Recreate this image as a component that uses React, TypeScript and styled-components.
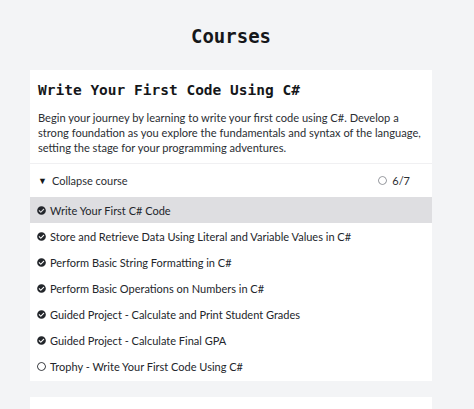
import * as React from 'react'
import styled, { createGlobalStyle } from 'styled-components'
import { FaCheckCircle, FaRegCircle } from 'react-icons/fa'

const GlobalStyle = createGlobalStyle`
  body {
    margin: 0;
    background: #f3f4f6;
    font-family: Lato, "Noto Sans", sans-serif;
    color: #1f2328;
  }
`

const Page = styled.main`
  padding: 24px 42px 0 30px;
`

const Title = styled.h1`
  margin: 0 0 22px;
  text-align: center;
  font-family: "DejaVu Sans Mono", monospace;
  font-weight: bold;
  font-size: 19px;
  line-height: 24px;
  color: #15171a;
`

const Card = styled.section`
  background: #fff;
  margin-bottom: 16px;
  padding-bottom: 2px;
`

const CardHead = styled.div`
  padding: 10px 5px 8px 8px;
  border-bottom: 1px solid #f0f0f2;
`

const CardTitle = styled.h2`
  margin: 0 0 10px;
  font-family: "DejaVu Sans Mono", monospace;
  font-weight: bold;
  font-size: 14.5px;
  line-height: 20px;
  color: #15171a;
`

const Description = styled.p`
  margin: 0;
  font-size: 11.1px;
  line-height: 15px;
  color: #2b2e33;
`

const Toggle = styled.div`
  display: flex;
  align-items: center;
  justify-content: space-between;
  height: 33px;
  padding: 0 22px 0 8px;
  font-size: 11px;
  color: #2b2e33;
`

const ToggleLabel = styled.span`
  display: flex;
  align-items: center;
  gap: 5px;
`

const Caret = styled.span`
  font-size: 9px;
  color: #15171a;
`

const Progress = styled.span`
  display: flex;
  align-items: center;
  gap: 5px;
  svg { color: #8a8d93; width: 9px; height: 9px; }
`

const List = styled.ul`
  list-style: none;
  margin: 0;
  padding: 0;
`

const Item = styled.li<{ $active?: boolean }>`
  display: flex;
  align-items: center;
  gap: 4px;
  height: 26px;
  padding-left: 7px;
  font-size: 11px;
  color: #23262b;
  background: ${p => (p.$active ? '#dedee1' : 'transparent')};
  svg { width: 9px; height: 9px; flex-shrink: 0; }
`

const modules = [
  { name: 'Write Your First C# Code', done: true },
  { name: 'Store and Retrieve Data Using Literal and Variable Values in C#', done: true },
  { name: 'Perform Basic String Formatting in C#', done: true },
  { name: 'Perform Basic Operations on Numbers in C#', done: true },
  { name: 'Guided Project - Calculate and Print Student Grades', done: true },
  { name: 'Guided Project - Calculate Final GPA', done: true },
  { name: 'Trophy - Write Your First Code Using C#', done: false },
]

const App = () => (
  <Page>
    <GlobalStyle />
    <Title>Courses</Title>
    <Card>
      <CardHead>
        <CardTitle>Write Your First Code Using C#</CardTitle>
        <Description>
          Begin your journey by learning to write your first code using C#. Develop a strong
          foundation as you explore the fundamentals and syntax of the language, setting the
          stage for your programming adventures.
        </Description>
      </CardHead>
      <Toggle>
        <ToggleLabel>
          <Caret>▼</Caret>
          Collapse course
        </ToggleLabel>
        <Progress>
          <FaRegCircle />
          6/7
        </Progress>
      </Toggle>
      <List>
        {modules.map((m, i) => (
          <Item key={m.name} $active={i === 0}>
            {m.done ? <FaCheckCircle /> : <FaRegCircle />}
            {m.name}
          </Item>
        ))}
      </List>
    </Card>
    <Card style={{ height: 40 }} />
  </Page>
)

export default App
